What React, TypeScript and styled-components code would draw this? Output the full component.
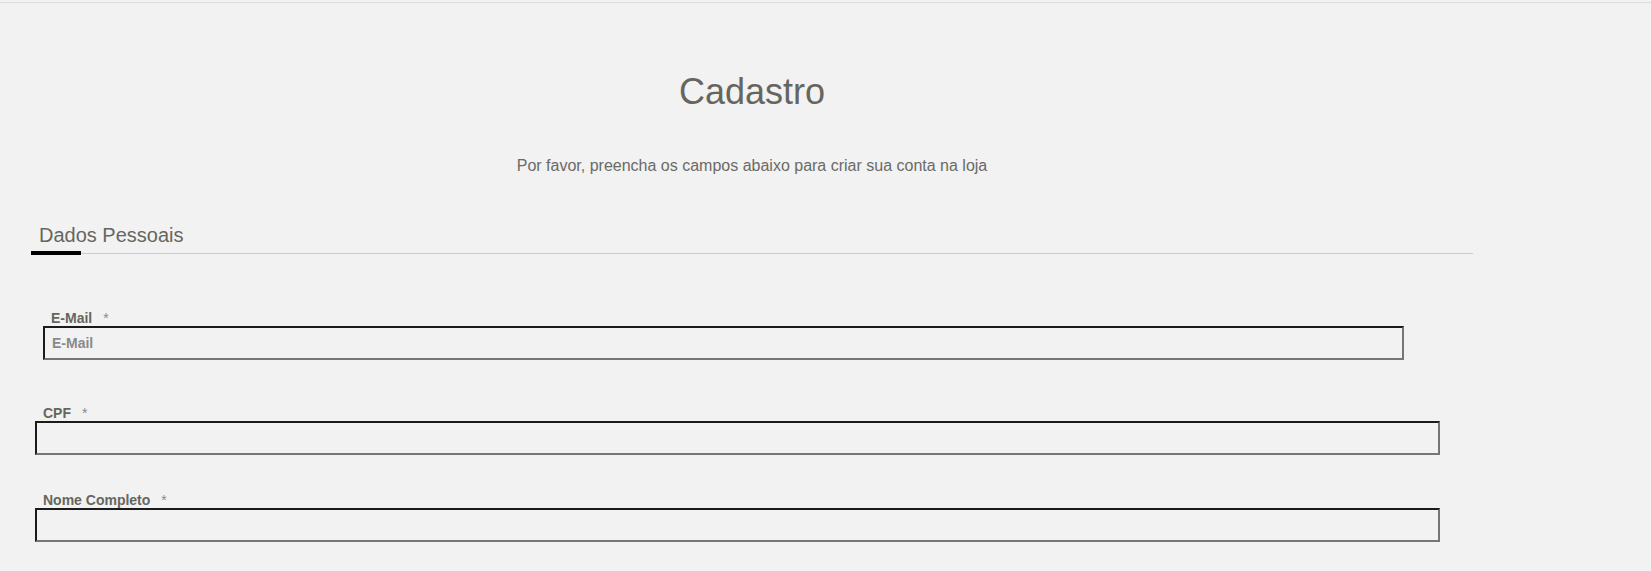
import React from 'react'
import styled, { createGlobalStyle } from 'styled-components'

const GlobalStyle = createGlobalStyle`
  html, body {
    margin: 0;
    padding: 0;
    background: #f2f2f2;
    font-family: "Liberation Sans", Arial, sans-serif;
    color: #666;
  }
`

const TopRule = styled.div`
  height: 2px;
  border-bottom: 1px solid #dcdcdc;
`

const Container = styled.main`
  margin-left: 31px;
  width: 1442px;
`

const Title = styled.h1`
  margin: 71px 0 0;
  font-size: 36px;
  line-height: 36px;
  font-weight: normal;
  text-align: center;
  color: #66665f;
`

const Subtitle = styled.p`
  margin: 48px 0 0;
  font-size: 16px;
  line-height: 16px;
  text-align: center;
  color: #6a6a66;
`

const Tabs = styled.nav`
  margin-top: 51px;
  display: flex;
  flex-direction: column;
`

const TabLabel = styled.span`
  padding-left: 8px;
  font-size: 20px;
  line-height: 20px;
  color: #66665f;
`

const TabRule = styled.div`
  margin-top: 6px;
  height: 4px;
  background: linear-gradient(#cccccc, #cccccc) 0 2px / 100% 1px no-repeat;
`

const Indicator = styled.div`
  width: 50px;
  height: 4px;
  background: #000;
`

const Form = styled.form`
  margin-top: 56px;
  display: flex;
  flex-direction: column;
`

const Field = styled.div<{ $indent: number; $width: number; $gap: number }>`
  display: flex;
  flex-direction: column;
  margin-left: ${p => p.$indent}px;
  width: ${p => p.$width}px;
  margin-bottom: ${p => p.$gap}px;
`

const Label = styled.label`
  padding-left: 8px;
  margin-bottom: 1px;
  font-size: 14px;
  line-height: 14px;
  font-weight: bold;
  color: #66665f;
`

const Required = styled.span`
  margin-left: 11px;
  font-weight: normal;
  color: #8a8a8a;
`

const Input = styled.input`
  box-sizing: border-box;
  width: 100%;
  height: 34px;
  margin: 0;
  padding: 0 7px;
  background: transparent;
  border-style: solid;
  border-width: 2px;
  border-color: #1b1b1b #767676 #767676 #1b1b1b;
  font-family: "Liberation Sans", Arial, sans-serif;
  font-size: 14px;
  font-weight: bold;
  color: #555;
  outline: none;

  &::placeholder {
    color: #8a8a8a;
  }
`

const fields = [
  { id: 'email', label: 'E-Mail', placeholder: 'E-Mail', indent: 12, width: 1361, gap: 46 },
  { id: 'cpf', label: 'CPF', placeholder: '', indent: 4, width: 1405, gap: 38 },
  { id: 'nome', label: 'Nome Completo', placeholder: '', indent: 4, width: 1405, gap: 0 },
]

export default function App() {
  return (
    <>
      <GlobalStyle />
      <TopRule />
      <Container>
        <Title>Cadastro</Title>
        <Subtitle>Por favor, preencha os campos abaixo para criar sua conta na loja</Subtitle>
        <Tabs>
          <TabLabel>Dados Pessoais</TabLabel>
          <TabRule>
            <Indicator />
          </TabRule>
        </Tabs>
        <Form onSubmit={e => e.preventDefault()}>
          {fields.map(f => (
            <Field key={f.id} $indent={f.indent} $width={f.width} $gap={f.gap}>
              <Label htmlFor={f.id}>
                {f.label}
                <Required>*</Required>
              </Label>
              <Input id={f.id} placeholder={f.placeholder} />
            </Field>
          ))}
        </Form>
      </Container>
    </>
  )
}
